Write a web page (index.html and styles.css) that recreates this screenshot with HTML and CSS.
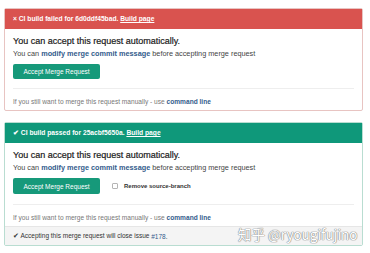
FILE: index.html
```html
<!DOCTYPE html>
<html lang="en">

<head>
  <meta charset="UTF-8" />
  <title>Merge request widgets</title>
  <link rel="stylesheet" href="styles.css">
</head>

<body>

  <div class="mr-widget failed">
    <div class="ci-status">
      <span class="ci-icon">×</span> CI build failed for 6d0ddf45bad. <a href="#" class="build-link">Build page</a>
    </div>
    <div class="mr-body">
      <h4>You can accept this request automatically.</h4>
      <p class="hint">You can <a href="#">modify merge commit message</a> before accepting merge request</p>
      <div class="accept-row">
        <button class="btn-accept">Accept Merge Request</button>
      </div>
      <hr />
      <p class="manual">If you still want to merge this request manually - use <a href="#">command line</a></p>
    </div>
  </div>

  <div class="mr-widget passed">
    <div class="ci-status">
      <span class="ci-icon">✔</span> CI build passed for 25acbf5650a. <a href="#" class="build-link">Build page</a>
    </div>
    <div class="mr-body">
      <h4>You can accept this request automatically.</h4>
      <p class="hint">You can <a href="#">modify merge commit message</a> before accepting merge request</p>
      <div class="accept-row">
        <button class="btn-accept">Accept Merge Request</button>
        <label class="remove-branch"><span class="checkbox"></span>Remove source-branch</label>
      </div>
      <hr />
      <p class="manual">If you still want to merge this request manually - use <a href="#">command line</a></p>
    </div>
    <div class="mr-footer">
      ✔ Accepting this merge request will close issue&nbsp;<a href="#">#178</a>.
    </div>
  </div>

  <!-- watermark over the second card -->
  <div class="watermark">知乎 @ryougifujino</div>

</body>

</html>
```

FILE: styles.css
```css
* {
  margin: 0;
  padding: 0;
  box-sizing: border-box;
}

body {
  font-family: 'Liberation Sans', Arial, sans-serif;
  background: #fff;
  color: #333;
  padding: 8px 7px 0 4px;
  position: relative;
  width: 370px;
  height: 253px;
  overflow: hidden;
}

a {
  color: #335c8c;
  font-weight: bold;
  text-decoration: none;
}

.mr-widget {
  border: 1px solid #e8c4c2;
  border-radius: 2px;
  background: #fff;
}

.mr-widget.passed {
  margin-top: 11px;
  border-color: #b9ddd1;
}

.ci-status {
  height: 20px;
  line-height: 20px;
  padding: 0 8px;
  color: #fff;
  font-size: 6.7px;
  font-weight: bold;
}

.failed .ci-status {
  background: #d9534f;
}

.passed .ci-status {
  background: #0f987a;
}

.ci-status .build-link {
  color: #fff;
  text-decoration: underline;
}

.mr-body {
  padding: 6px 8px 3px;
}

h4 {
  font-size: 9px;
  line-height: 13px;
  font-weight: normal;
  color: #1a1a1a;
  -webkit-text-stroke: 0.2px #1a1a1a;
}

.hint {
  font-size: 7.3px;
  line-height: 10px;
  color: #444;
  margin-top: 1px;
}

.manual {
  font-size: 6.6px;
  line-height: 10px;
  color: #777;
}

.accept-row {
  display: flex;
  align-items: center;
  gap: 12px;
  margin-top: 5px;
}

.btn-accept {
  width: 87px;
  height: 15px;
  background: #16997a;
  color: #fff;
  border: none;
  border-radius: 2px;
  font-family: inherit;
  font-size: 6.5px;
}

.passed .btn-accept {
  height: 16px;
}

.remove-branch {
  display: flex;
  align-items: center;
  gap: 6px;
  font-size: 6px;
  font-weight: bold;
  color: #333;
}

.checkbox {
  width: 6px;
  height: 6px;
  border: 1px solid #b5b5b5;
  border-radius: 1px;
  background: #fff;
}

hr {
  border: none;
  border-top: 1px solid #eee;
  margin: 9px 0 8px;
}

.passed hr {
  margin: 10px 0 8px;
}

.mr-footer {
  height: 19px;
  margin-top: 0;
  padding: 0 8px;
  display: flex;
  align-items: center;
  background: #f4f4f4;
  border-top: 1px solid #e6e6e6;
  font-size: 6.5px;
  color: #333;
}

.mr-footer a {
  font-weight: normal;
}

.watermark {
  position: absolute;
  left: 238px;
  top: 224px;
  font-family: 'Noto Sans CJK SC', 'Noto Sans', sans-serif;
  font-size: 13.5px;
  color: #fff;
  text-shadow: 0 0 1px #888, 0 0 1px #888, 0 0 1px #888;
}
```
